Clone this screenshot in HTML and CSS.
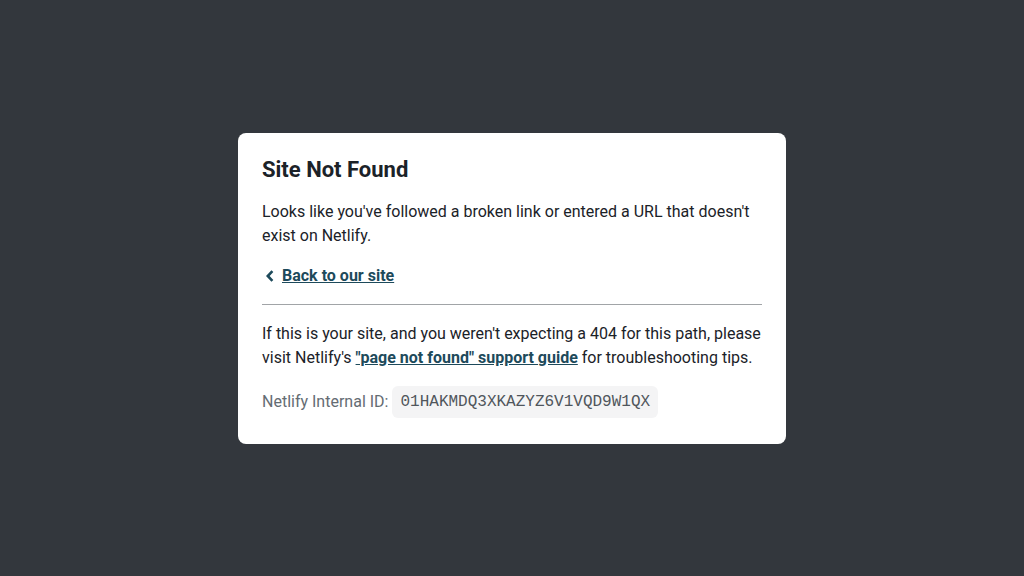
FILE: index.html
```html
<!DOCTYPE html>
<html lang="en">
<head>
    <meta charset="UTF-8">
    <meta name="viewport" content="width=device-width, initial-scale=1.0">
    <title>Page Not Found</title>
    <link rel="stylesheet" href="styles.css">
</head>
<body>
    <div class="main">
        <div class="card">
            <h1>Site Not Found</h1>
            <p>Looks like you've followed a broken link or entered a URL that doesn't exist on Netlify.</p>
            <a class="back" href="#">
                <svg class="chev" width="10" height="12" viewBox="0 0 10 12">
                    <path d="M7.4 1.2 L2.8 6 L7.4 10.8" fill="none" stroke="currentColor" stroke-width="2.6"/>
                </svg>
                <span>Back to our site</span>
            </a>
            <hr>
            <p>If this is your site, and you weren't expecting a 404 for this path, please visit Netlify's <a href="#">"page not found" support guide</a> for troubleshooting tips.</p>
            <p class="id">Netlify Internal ID: <code>01HAKMDQ3XKAZYZ6V1VQD9W1QX</code></p>
        </div>
    </div>
</body>
</html>
```

FILE: styles.css
```css
/* Base styles */
body {
    margin: 0;
    background: #33373d;
    font-family: Roboto, 'Liberation Sans', sans-serif;
    font-size: 16px;
    line-height: 24px;
    color: #1b2228;
}

.main {
    height: 100vh;
    display: flex;
    align-items: center;
    justify-content: center;
}

.card {
    width: 500px;
    background: white;
    border-radius: 8px;
    padding: 24px 24px 26px;
}

h1 {
    margin: 0 0 18px;
    font-size: 22px;
    line-height: 25px;
    font-weight: 700;
}

p {
    margin: 0 0 16px;
}

a {
    color: #1d4a5b;
    font-weight: 700;
}

.back {
    display: flex;
    align-items: center;
    gap: 7px;
    margin-left: 3px;
}

.chev {
    display: block;
}

hr {
    border: none;
    border-top: 1px solid #a1a4a7;
    margin: 16px 0 17px;
}

.id {
    margin: 0;
    color: #646c73;
    display: flex;
    align-items: center;
    gap: 4px;
}

code {
    font-family: 'Liberation Mono', 'Courier New', monospace;
    font-size: 16px;
    color: #50565c;
    background: #f4f4f5;
    border-radius: 6px;
    padding: 4px 8px;
}
```
